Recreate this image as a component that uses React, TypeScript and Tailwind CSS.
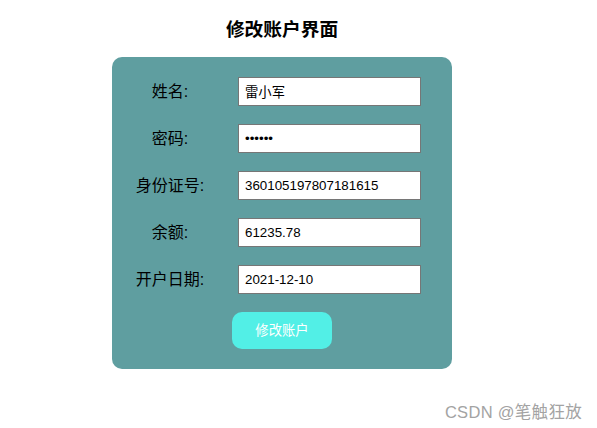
import React from "react";

const fields = [
  { label: "姓名:", value: "雷小军", type: "text" },
  { label: "密码:", value: "123456", type: "password" },
  { label: "身份证号:", value: "360105197807181615", type: "text" },
  { label: "余额:", value: "61235.78", type: "text" },
  { label: "开户日期:", value: "2021-12-10", type: "text" },
];

const App = () => {
  return (
    <div
      lang="zh-CN"
      className="relative w-[597px] h-[428px] bg-white overflow-hidden"
      style={{ fontFamily: '"Liberation Sans", "Noto Sans CJK SC", sans-serif' }}
    >
      <div className="ml-[112px] w-[340px]">
        {/* Title */}
        <h3
          className="mt-[14px] text-center text-[18.72px] font-bold leading-[28px] text-black"
          style={{ fontFamily: '"Noto Sans CJK SC", sans-serif' }}
        >
          修改账户界面
        </h3>

        {/* Form panel */}
        <div className="mt-[15px] flex flex-col gap-[18px] rounded-[10px] bg-[#5f9ea0] pt-[20px] pb-[20px]">
          {fields.map((f) => (
            <div key={f.label} className="flex items-center">
              <label className="w-[116px] text-center text-[16px] text-black">{f.label}</label>
              <input
                type={f.type}
                defaultValue={f.value}
                readOnly
                className="ml-[10px] h-[29px] w-[183px] border border-[#767676] bg-white px-[6px] text-[13.33px] text-black outline-none"
              />
            </div>
          ))}

          {/* Submit */}
          <div className="flex justify-center">
            <button
              type="button"
              className="h-[37px] w-[100px] rounded-[10px] bg-[#52efe6] text-[13.33px] text-white"
            >
              修改账户
            </button>
          </div>
        </div>
      </div>

      {/* Watermark */}
      <div className="absolute right-[15px] top-[400px] text-[16.5px] tracking-[0.3px] text-[#a3a3a3]">
        CSDN @笔触狂放
      </div>
    </div>
  );
};

export default App;
